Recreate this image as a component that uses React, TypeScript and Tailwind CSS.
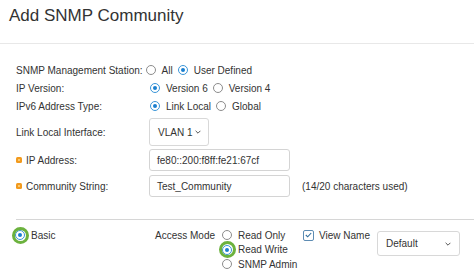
import React from "react";

function Radio({ checked = false, ring = false }: { checked?: boolean; ring?: boolean }) {
  return (
    <span
      className={
        "relative inline-flex w-[10px] h-[10px] shrink-0 items-center justify-center rounded-full border bg-white " +
        (checked ? "border-[#3a95d8]" : "border-[#8c8c8c]")
      }
    >
      {checked && <span className="w-[4px] h-[4px] rounded-full bg-[#1a7fcf]" />}
      {ring && <span className="absolute -inset-[4.5px] rounded-full border-[3px] border-[#6cb23e]" />}
    </span>
  );
}

function Option({ checked = false, label, ring = false }: { checked?: boolean; label: string; ring?: boolean }) {
  return (
    <span className="inline-flex items-center mr-[5px]">
      <Radio checked={checked} ring={ring} />
      <span className="ml-[6px]">{label}</span>
    </span>
  );
}

function Chevron() {
  return (
    <svg width="6" height="4" viewBox="0 0 6 4" className="shrink-0">
      <path d="M0.6 0.8 L3 3.2 L5.4 0.8" fill="none" stroke="#555" strokeWidth="1" />
    </svg>
  );
}

function Bullet() {
  return (
    <span className="inline-flex w-[6px] h-[6px] items-center justify-center rounded-[1.5px] bg-[#f29a1e] mr-[4px] shrink-0">
      <span className="w-[2px] h-[2px] rounded-full bg-[#fbd88f]" />
    </span>
  );
}

export default function App() {
  return (
    <div className="w-[474px] h-[278px] overflow-hidden bg-white text-[#333] font-['Liberation_Sans',Arial,sans-serif] text-[10px]">
      <div className="h-[44px] border-b border-[#e8e8e8] pl-[9px] pt-[6px]">
        <div className="text-[17px] leading-[20px] text-[#333]">Add SNMP Community</div>
      </div>

      <div className="pl-[16px] pt-[17px]">
        <div className="flex items-center h-[18px]">
          <span className="mr-[3px]">SNMP Management Station:</span>
          <Option label="All" />
          <Option checked label="User Defined" />
        </div>
        <div className="flex items-center h-[18px]">
          <span className="w-[134px]">IP Version:</span>
          <Option checked label="Version 6" />
          <Option label="Version 4" />
        </div>
        <div className="flex items-center h-[18px]">
          <span className="w-[134px]">IPv6 Address Type:</span>
          <Option checked label="Link Local" />
          <Option label="Global" />
        </div>

        <div className="flex items-center mt-[3px]">
          <span className="w-[133px]">Link Local Interface:</span>
          <div className="flex items-center justify-between w-[60px] h-[28px] border border-[#d8d8d8] rounded-[3px] pl-[8px] pr-[7px]">
            <span>VLAN 1</span>
            <Chevron />
          </div>
        </div>

        <div className="flex items-center mt-[3px]">
          <span className="w-[133px] flex items-center">
            <Bullet />
            IP Address:
          </span>
          <div className="flex items-center w-[141px] h-[22px] border border-[#d4d4d4] rounded-[3px] pl-[7px]">
            fe80::200:f8ff:fe21:67cf
          </div>
        </div>

        <div className="flex items-center mt-[4px]">
          <span className="w-[133px] flex items-center">
            <Bullet />
            Community String:
          </span>
          <div className="flex items-center w-[141px] h-[22px] border border-[#d4d4d4] rounded-[3px] pl-[7px]">
            Test_Community
          </div>
          <span className="ml-[12px]">(14/20 characters used)</span>
        </div>

        <div className="mt-[22px] h-px bg-[#d6d6d6]" />
      </div>

      <div className="flex items-start pl-[15px] pt-[8px]">
        <div className="w-[140px] h-[14.5px] flex items-center">
          <Radio checked ring />
          <span className="ml-[6px]">Basic</span>
        </div>
        <div className="w-[67px] h-[14.5px] flex items-center">Access Mode</div>
        <div className="w-[81px] flex flex-col">
          <div className="h-[14.5px] flex items-center">
            <Radio />
            <span className="ml-[6px]">Read Only</span>
          </div>
          <div className="h-[14.5px] flex items-center">
            <Radio checked ring />
            <span className="ml-[6px]">Read Write</span>
          </div>
          <div className="h-[14.5px] flex items-center">
            <Radio />
            <span className="ml-[6px]">SNMP Admin</span>
          </div>
        </div>
        <div className="w-[74px] h-[14.5px] flex items-center">
          <span className="inline-flex w-[11px] h-[11px] items-center justify-center border border-[#5d8cb3] rounded-[2px] shrink-0">
            <svg width="7" height="6" viewBox="0 0 7 6">
              <path d="M0.8 3 L2.7 4.8 L6.2 1" fill="none" stroke="#2f6d9c" strokeWidth="1.1" />
            </svg>
          </span>
          <span className="ml-[5px]">View Name</span>
        </div>
        <div className="mt-[3px] flex items-center justify-between w-[83px] h-[25px] border border-[#d8d8d8] rounded-[3px] pl-[8px] pr-[8px]">
          <span>Default</span>
          <Chevron />
        </div>
      </div>
    </div>
  );
}
